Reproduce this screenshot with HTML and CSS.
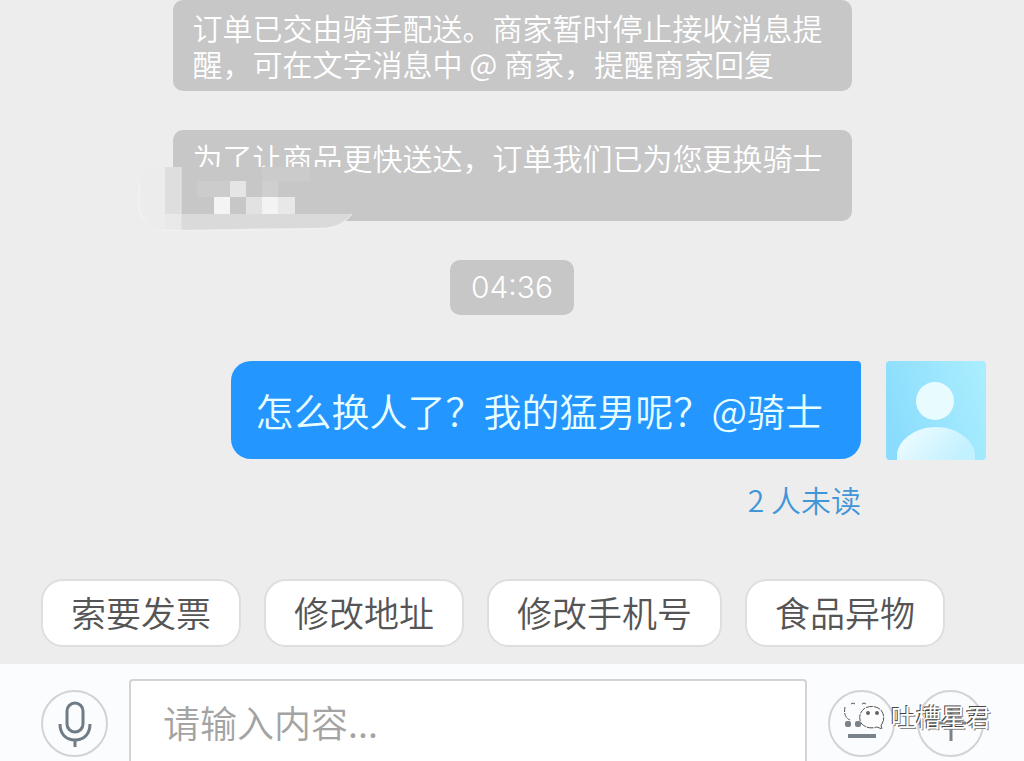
FILE: index.html
```html
<!DOCTYPE html>
<html lang="zh-CN">
<head>
  <meta charset="UTF-8" />
  <meta name="viewport" content="width=device-width, initial-scale=1" />
  <title>订单聊天</title>
  <link rel="stylesheet" href="styles.css">
</head>
<body>
  <main class="chat">
    <p class="notice">订单已交由骑手配送。商家暂时停止接收消息提醒，可在文字消息中 @ 商家，提醒商家回复</p>

    <div class="notice">
      为了让商品更快送达，订单我们已为您更换骑士
      <!-- hides the rider's name -->
      <svg class="mosaic" width="224" height="72" viewBox="0 0 224 72" aria-hidden="true">
        <path d="M8 8H42V70Q20 72 12 58Q2 32 8 8Z" fill="#ececec"/>
        <path d="M5 25Q0 44 8 60" fill="none" stroke="#f5f5f5"/>
        <path d="M30 7H207V54H30Z" fill="#c7c7c7"/>
        <path d="M30 7H46V54H30Z" fill="#dedede"/>
        <path d="M46 54H217Q208 66 192 68Q120 68 46 70Z" fill="#dadada"/>
        <path d="M30 54H46V70H30Z" fill="#e9e9e9"/>
        <path d="M20 70Q110 72 192 68Q208 66 217 54" fill="none" stroke="#f2f2f2"/>
        <path d="M46 7V70" stroke="#e9e9e9"/>
        <path d="M62 21H95V37H62Z" fill="#cccccc"/>
        <path d="M127 7H175V21H127Z" fill="#cbcbcb"/>
        <path d="M95 21H111V37H95Z" fill="#e5e5e5"/>
        <path d="M127 21H143V37H127Z" fill="#cfcfcf"/>
        <path d="M79 37H95V54H79Z" fill="#f4f4f4"/>
        <path d="M111 37H127V54H111Z" fill="#e2e2e2"/>
        <path d="M127 37H143V54H127Z" fill="#f3f3f3"/>
        <path d="M143 37H160V54H143Z" fill="#e8e8e8"/>
      </svg>
    </div>

    <time class="time">04:36</time>

    <div class="message">
      <div class="message-body">
        <p class="bubble">怎么换人了？我的猛男呢？@骑士</p>
        <p class="unread">2 人未读</p>
      </div>
      <svg class="avatar" viewBox="0 0 100 99" role="img" aria-label="头像">
        <defs>
          <linearGradient id="sky" x1="0" y1="0.6" x2="1" y2="0.3">
            <stop offset="0" stop-color="#89dcfd"/>
            <stop offset="1" stop-color="#a9edfe"/>
          </linearGradient>
          <linearGradient id="person" x1="0" y1="0" x2="1" y2="0.4">
            <stop offset="0" stop-color="#f4fdff"/>
            <stop offset="1" stop-color="#c2f1ff"/>
          </linearGradient>
        </defs>
        <rect width="100" height="99" rx="4" fill="url(#sky)"/>
        <circle cx="49" cy="40" r="19" fill="#e8fbff"/>
        <path d="M11 99V92C14 77 31 66 50 66S86 77 89 92V99Z" fill="url(#person)"/>
      </svg>
    </div>
  </main>

  <nav class="quick-replies">
    <button type="button">索要发票</button>
    <button type="button">修改地址</button>
    <button type="button">修改手机号</button>
    <button type="button">食品异物</button>
  </nav>

  <form class="composer">
    <button type="button" class="icon-btn" aria-label="语音">
      <svg width="66" height="66" viewBox="0 0 66 66" fill="none" stroke="#6f7b85" stroke-width="3">
        <rect x="25" y="13" width="16" height="29" rx="8"/>
        <path d="M18 34C18 44 24 50 33 50S48 44 48 34M33 50V57"/>
      </svg>
    </button>
    <input type="text" class="text-input" placeholder="请输入内容..." aria-label="消息内容" />
    <div class="actions">
      <button type="button" class="icon-btn" aria-label="表情">
        <svg width="66" height="66" viewBox="0 0 66 66" fill="#7b838a">
          <rect x="16" y="31" width="6" height="6" rx="2"/>
          <rect x="26" y="31" width="6" height="6" rx="2"/>
          <rect x="19" y="44" width="28" height="4"/>
        </svg>
      </button>
      <button type="button" class="icon-btn" aria-label="更多">
        <svg width="66" height="66" viewBox="0 0 66 66" fill="none" stroke="#7b838a" stroke-width="3">
          <path d="M18 33H48M33 18V51"/>
        </svg>
      </button>
      <div class="watermark">
        <svg width="42" height="32" viewBox="0 0 42 32" fill="none" stroke="#555">
          <path d="M2 7Q0 17 7 20" stroke-dasharray="5 1"/>
          <path d="M8 4Q10 2 12 4M19 4Q21 2 23 4"/>
          <path d="M39 24Q43 17 38 10Q31 4 22 8Q14 14 18 23Q24 30 34 27L39 29L38 25Z" fill="#fdfdfd" stroke-dasharray="7 1"/>
          <circle cx="25" cy="13" r="2" fill="#666" stroke="none"/>
          <circle cx="34" cy="13" r="2" fill="#666" stroke="none"/>
        </svg>
        <span>吐槽星君</span>
      </div>
    </div>
  </form>
</body>
</html>
```
FILE: styles.css
```css
* {
  box-sizing: border-box;
  margin: 0;
  padding: 0;
  font-family: "Noto Sans CJK SC", sans-serif;
}

body {
  background-color: #ededed;
  height: 100vh;
  overflow: hidden;
  font-weight: 350;
}

.chat {
  display: flex;
  flex-direction: column;
  align-items: center;
  padding: 0 38px;
}

.notice {
  position: relative;
  width: 100%;
  max-width: 679px;
  min-height: 91px;
  margin-bottom: 39px;
  padding: 9px 20px 10px;
  border-radius: 10px;
  background-color: #c7c7c7;
  color: #fff;
  font-size: 30px;
  line-height: 36px;
}

.mosaic {
  position: absolute;
  left: -38px;
  top: 30px;
}

.time {
  margin-bottom: 46px;
  padding: 9px 21px 10px;
  border-radius: 10px;
  background-color: #c7c7c7;
  color: #fff;
  font-family: Inter, sans-serif;
  font-size: 30px;
  line-height: 36px;
}

.message {
  display: flex;
  align-items: flex-start;
  align-self: flex-end;
  gap: 25px;
}

.message-body {
  text-align: right;
}

.bubble {
  padding: 24px 38px 24px 24px;
  border-radius: 20px 4px 20px 20px;
  background-color: #2496ff;
  color: #e8ffff;
  font-size: 38px;
  line-height: 50px;
  text-align: left;
}

.unread {
  margin-top: 22px;
  color: #4196d8;
  font-size: 30px;
  line-height: 36px;
}

.avatar {
  flex: none;
  width: 100px;
  height: 99px;
}

.quick-replies {
  display: flex;
  gap: 23px;
  padding: 62px 41px 17px;
}

.quick-replies button {
  padding: 6px 28px 8px;
  border: 2px solid #dedede;
  border-radius: 22px;
  background-color: #fff;
  color: #555;
  font-size: 35px;
  font-weight: 350;
  line-height: 50px;
  white-space: nowrap;
}

.composer {
  display: flex;
  align-items: center;
  gap: 21px;
  padding: 15px 40px 15px 41px;
  background-color: #fbfcfd;
}

.icon-btn {
  display: flex;
  align-items: center;
  justify-content: center;
  flex: none;
  width: 67px;
  height: 67px;
  border: 2px solid #d3d3d6;
  border-radius: 50%;
  background: none;
}

.icon-btn svg {
  flex: none;
}

.text-input {
  flex: 1;
  min-width: 0;
  padding: 16px 32px 18px;
  border: 2px solid #d3d3d6;
  border-radius: 4px;
  background-color: #fff;
  color: #555;
  font-size: 37px;
  font-weight: 350;
  line-height: 50px;
}

.text-input::placeholder {
  color: #a3a3a3;
}

.actions {
  position: relative;
  display: flex;
  gap: 22px;
}

.watermark {
  position: absolute;
  left: 15px;
  top: 10px;
  display: flex;
  align-items: center;
  gap: 6px;
  color: #fff;
  font-size: 25px;
  font-weight: 400;
  line-height: 32px;
  white-space: nowrap;
  text-shadow: -1px -1px 0 #444, 1px 1px 0 #888;
  pointer-events: none;
}
```
